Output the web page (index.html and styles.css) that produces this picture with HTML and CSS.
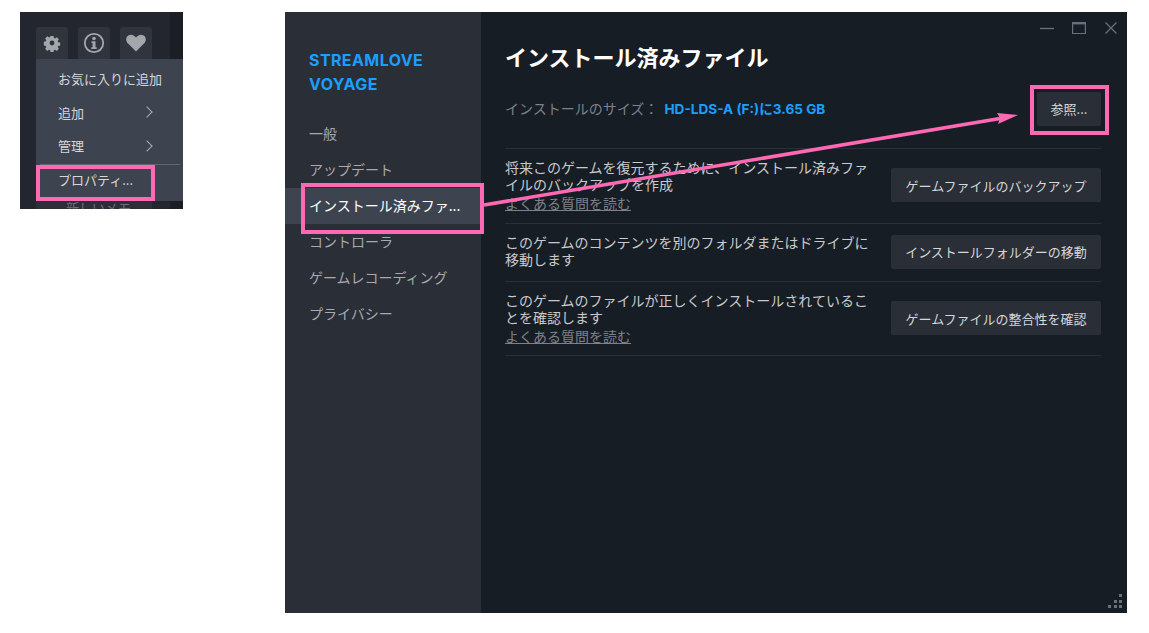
FILE: index.html
```html
<!DOCTYPE html>
<html lang="ja">
  <head>
    <title>プロパティ</title>
    <link rel="stylesheet" href="styles.css">
  </head>

  <body>
    <div class="page">
      <div class="crop">
        <div class="icon-row">
          <div class="icon-btn">
            <svg width="18" height="18" viewBox="0 0 18 18"><path fill="#a3a6ab" fill-rule="evenodd" d="M7.3 1h3.4l.4 2.2 1.3.6 1.9-1.3 2.4 2.4-1.3 1.9.6 1.3 2.2.4v3.4l-2.2.4-.6 1.3 1.3 1.9-2.4 2.4-1.9-1.3-1.3.6-.4 2.2H7.3l-.4-2.2-1.3-.6-1.9 1.3-2.4-2.4 1.3-1.9-.6-1.3-2.2-.4V7.500l2.2-.4.6-1.300-1.300-1.900 2.400-2.400 1.900 1.300 1.300-.6zM9 6.300a2.700 2.700 0 1 0 0 5.400 2.700 2.700 0 0 0 0-5.400z" transform="translate(1 1) scale(.89)"/></svg>
          </div>
          <div class="icon-btn">
            <svg width="22" height="22" viewBox="0 0 22 22"><circle cx="11" cy="11" r="9.200" fill="none" stroke="#a3a6ab" stroke-width="1.800"/><circle cx="11" cy="6.500" r="1.800" fill="#a3a6ab"/><path fill="#a3a6ab" d="M8.500 9.300h4v6h1.200v1.800H8.300v-1.800h1.300v-4.200H8.500z"/></svg>
          </div>
          <div class="icon-btn">
            <svg width="20" height="18" viewBox="0 0 20 18"><path fill="#a3a6ab" d="M10 17.500 2 9.500C-.5 7-.3 3.400 2 1.700 4.300 0 7.500.5 10 3.500 12.500.5 15.700 0 18 1.700c2.300 1.700 2.500 5.300 0 7.800z"/></svg>
          </div>
        </div>
        <div class="menu">
          <div class="menu-item">お気に入りに追加</div>
          <div class="menu-item">追加<span class="chev"></span></div>
          <div class="menu-item">管理<span class="chev"></span></div>
          <div class="menu-item menu-last">プロパティ...</div>
        </div>
        <div class="under-menu">新しいメモ</div>
      </div>

      <div class="window">
        <div class="side">
          <div class="game-title">STREAMLOVE VOYAGE</div>
          <div class="nav">
            <div class="nav-item">一般</div>
            <div class="nav-item">アップデート</div>
            <div class="nav-item nav-on">インストール済みファ...</div>
            <div class="nav-item">コントローラ</div>
            <div class="nav-item">ゲームレコーディング</div>
            <div class="nav-item">プライバシー</div>
          </div>
        </div>
        <div class="main">
          <div class="win-ctrl">
            <svg width="14" height="14" viewBox="0 0 14 14"><path stroke="#67707b" stroke-width="1.300" d="M0 7.500h14"/></svg>
            <svg width="14" height="14" viewBox="0 0 14 14"><path fill="none" stroke="#67707b" stroke-width="1.200" d="M.6 1.500h12.800v11H.6z"/><path stroke="#67707b" stroke-width="2.400" d="M0 2.200h14"/></svg>
            <svg width="14" height="14" viewBox="0 0 14 14"><path stroke="#67707b" stroke-width="1.300" d="M1.500 1.500l11 11M12.500 1.500l-11 11"/></svg>
          </div>
          <h1>インストール済みファイル</h1>
          <div class="size-row">
            <div class="size-text">インストールのサイズ： <b>HD-LDS-A (F:)に3.65 GB</b></div>
            <div class="btn btn-small">参照...</div>
          </div>
          <div class="row">
            <div class="row-text">将来このゲームを復元するために、インストール済みファイルのバックアップを作成<a href="#">よくある質問を読む</a></div>
            <div class="btn">ゲームファイルのバックアップ</div>
          </div>
          <div class="row">
            <div class="row-text">このゲームのコンテンツを別のフォルダまたはドライブに移動します</div>
            <div class="btn">インストールフォルダーの移動</div>
          </div>
          <div class="row">
            <div class="row-text">このゲームのファイルが正しくインストールされていることを確認します<a href="#">よくある質問を読む</a></div>
            <div class="btn">ゲームファイルの整合性を確認</div>
          </div>
          <svg class="grip" width="15" height="15" viewBox="0 0 15 15">
            <path fill="#6b6f76" d="M11 0h3v3h-3zM6 6h3v3H6zM11 6h3v3h-3zM0 11h3v3H0zM6 11h3v3H6zM11 11h3v3h-3z"/>
          </svg>
        </div>
      </div>

      <!-- 注釈 -->
      <div class="mark mark-menu"></div>
      <div class="mark mark-nav"></div>
      <div class="mark mark-btn"></div>
      <svg class="arrow" width="1149" height="633" viewBox="0 0 1149 633">
        <path stroke="#ff69b4" stroke-width="3.500" d="M484 205 1000 118.500"/>
        <path fill="#ff69b4" d="M1018 115 998 124 1000 118 997 113z"/>
      </svg>
    </div>
  </body>
</html>
```

FILE: styles.css
```css
body{
    margin: 0;
    background: #fff;
    font-family: "Noto Sans CJK JP", "Noto Sans", sans-serif;
    font-size: 14px;
}

.page{
    position: relative;
    display: flex;
    align-items: flex-start;
    width: 1149px;
    height: 633px;
    padding: 12px 0 0 20px;
    box-sizing: border-box;
    overflow: hidden;
}

/* left crop */
.crop{
    width: 163px;
    height: 197px;
    padding: 15px 0 0 16px;
    box-sizing: border-box;
    background: linear-gradient(90deg, #23262e 0, #23262e 150px, #1b1e24 150px);
    overflow: hidden;
    flex-shrink: 0;
}

.icon-row{
    display: flex;
    gap: 10px;
}

.icon-btn{
    display: flex;
    justify-content: center;
    align-items: center;
    width: 32px;
    height: 32px;
    background: #30343d;
    border-radius: 3px 3px 0 0;
}

.menu{
    width: 147px;
    height: 142px;
    padding-top: 3px;
    box-sizing: border-box;
    background: #3d4450;
    color: #d6d7d9;
    font-size: 13px;
}

.menu-item{
    display: flex;
    justify-content: space-between;
    align-items: center;
    height: 33.500px;
    padding-left: 22px;
    white-space: nowrap;
}

.menu-last{
    border-top: 1px solid #62666d;
    margin: 1px 3px 0 4px;
    padding-left: 18px;
    height: 30px;
}

.chev{
    width: 7px;
    height: 7px;
    margin-right: 32px;
    border-top: 1px solid #a9abaf;
    border-right: 1px solid #a9abaf;
    transform: rotate(45deg);
}

.under-menu{
    width: 116px;
    padding-left: 30px;
    box-sizing: border-box;
    height: 10px;
    line-height: 14px;
    font-size: 13px;
    color: #6d7077;
    background: #2c2f38;
}

/* window */
.window{
    display: flex;
    width: 842px;
    height: 601px;
    margin-left: 102px;
    flex-shrink: 0;
    color: #c9cacc;
}

.side{
    width: 196px;
    background: #2a2e37;
    padding-top: 36px;
    box-sizing: border-box;
}

.game-title{
    width: 130px;
    margin-left: 24px;
    color: #1a9fff;
    font-family: "Inter", "Open Sans", sans-serif;
    font-size: 16px;
    font-weight: 700;
    letter-spacing: .4px;
    line-height: 24px;
}

.nav{
    margin-top: 20px;
}

.nav-item{
    height: 36px;
    padding-left: 24px;
    line-height: 34px;
    color: #a8a9ad;
}

.nav-on{
    background: #3d4450;
    color: #fff;
}

.main{
    position: relative;
    flex: 1;
    background: #171d25;
    padding: 28px 26px 0 24px;
    box-sizing: border-box;
}

.win-ctrl{
    position: absolute;
    top: 9px;
    right: 9px;
    display: flex;
    gap: 18px;
}

h1{
    margin: 0;
    font-size: 22px;
    font-weight: 700;
    line-height: 32px;
    color: #fff;
}

.size-row{
    display: flex;
    justify-content: space-between;
    margin-top: 20px;
    height: 56px;
}

.size-text{
    color: #7d828a;
    line-height: 20px;
    margin-top: 6px;
}

.size-text b{
    margin-left: 3px;
    color: #1a9fff;
    font-family: "Inter", "Noto Sans CJK JP", sans-serif;
    font-size: 13.600px;
}

.row{
    display: flex;
    justify-content: space-between;
    align-items: center;
    padding: 9.500px 0 11.500px;
    border-top: 1px solid #2b2f37;
}

.row:last-of-type{
    padding-bottom: 10.500px;
    border-bottom: 1px solid #2b2f37;
}

.row-text{
    width: 368px;
    min-height: 36px;
    line-height: 17px;
    color: #c9cacc;
}

.row-text a{
    display: block;
    margin-top: 2px;
    color: #7d828a;
    text-decoration: underline;
}

.btn{
    display: flex;
    justify-content: center;
    align-items: center;
    width: 210px;
    height: 34px;
    background: #2a2e37;
    border-radius: 2px;
    color: #d6d7d9;
    font-size: 13px;
}

.btn-small{
    width: 64px;
    padding-bottom: 2px;
    box-sizing: border-box;
}

.grip{
    position: absolute;
    right: 4px;
    bottom: 4px;
}

/* annotations */
.mark{
    position: absolute;
    border: 4px solid #ff69b4;
    box-sizing: border-box;
}

.mark-menu{
    left: 36px;
    top: 165px;
    width: 119px;
    height: 36px;
}

.mark-nav{
    left: 301px;
    top: 183px;
    width: 183px;
    height: 51px;
}

.mark-btn{
    left: 1030px;
    top: 85px;
    width: 79px;
    height: 50px;
}

.arrow{
    position: absolute;
    left: 0;
    top: 0;
}
```
